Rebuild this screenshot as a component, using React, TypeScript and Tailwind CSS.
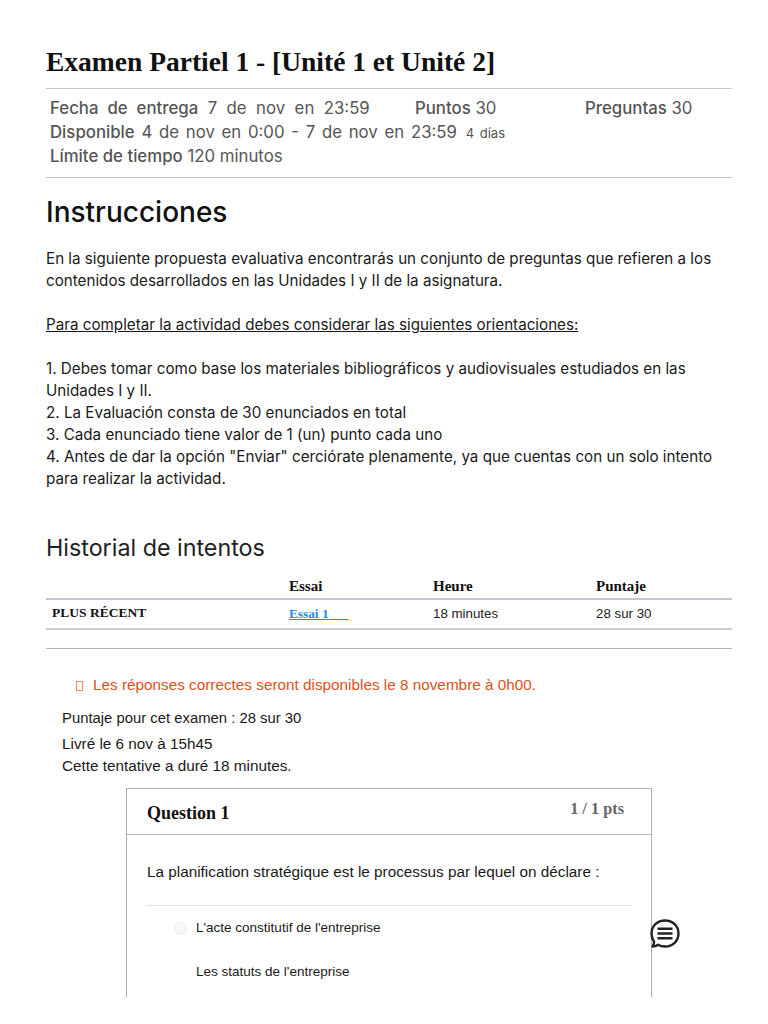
const serif = "font-['Liberation_Serif',serif]";
const arial = "font-['Liberation_Sans',sans-serif]";
const geo = "font-['Inter',sans-serif]";

function ChatIcon() {
  return (
    <svg width="32" height="32" viewBox="0 0 32 32" fill="none">
      <path d="M16 2.500C23.700 2.500 29.500 8 29.500 15.500S23.700 28.500 16 28.500c-2.600 0-5-.6-7-1.800-1.500 1.200-3.200 1.800-5.500 1.800 1-1.400 1.600-2.700 1.600-4.600C3.600 21.600 2.500 18.700 2.500 15.500 2.500 8 8.300 2.500 16 2.500Z" fill="white" stroke="#222" strokeWidth="2.400" strokeLinejoin="round" />
      <path d="M8.500 10.800h15M8.500 15.500h15M8.500 20.200h15" stroke="#222" strokeWidth="2.400" />
    </svg>
  );
}

export default function App() {
  return (
    <div className="relative h-[997px] overflow-hidden bg-white pl-[46px] pr-9 pt-[45px]">
      <h1 className={`${serif} border-b border-[#c8c8c8] pb-[9px] text-[27.500px] font-bold leading-[34px] text-[#111]`}>
        Examen Partiel 1 - [Unité 1 et Unité 2]
      </h1>

      <div className={`${geo} border-b border-[#c4c4c4] pb-[8px] pl-1 pt-[8px] text-[16.800px] leading-[23.500px] text-[#555]`}>
        <div className="flex">
          <div className="w-[365px] whitespace-pre"><b className="font-medium">Fecha  de  entrega</b>  7  de  nov  en  23:59</div>
          <div className="w-[170px]"><b className="font-medium">Puntos</b> 30</div>
          <div><b className="font-medium">Preguntas</b> 30</div>
        </div>
        <div className="[word-spacing:2px]"><b className="font-medium">Disponible</b> 4 de nov en 0:00 - 7 de nov en 23:59 <span className="ml-[2px] text-[13px]">4 días</span></div>
        <div><b className="font-medium">Límite de tiempo</b> 120 minutos</div>
      </div>

      <h2 className={`${geo} mt-[16px] text-[28px] font-medium leading-[36px] text-[#111]`}>Instrucciones</h2>

      <div className={`${geo} mt-[18px] text-[15.200px] leading-[22px] text-[#1a1a1a]`}>
        <p>En la siguiente propuesta evaluativa encontrarás un conjunto de preguntas que refieren a los</p>
        <p>contenidos desarrollados en las Unidades I y II de la asignatura.</p>
        <p className="mt-[22px] underline">Para completar la actividad debes considerar las siguientes orientaciones:</p>
        <p className="mt-[22px]">1. Debes tomar como base los materiales bibliográficos y audiovisuales estudiados en las</p>
        <p>Unidades I y II.</p>
        <p>2. La Evaluación consta de 30 enunciados en total</p>
        <p>3. Cada enunciado tiene valor de 1 (un) punto cada uno</p>
        <p>4. Antes de dar la opción "Enviar" cerciórate plenamente, ya que cuentas con un solo intento</p>
        <p>para realizar la actividad.</p>
      </div>

      <h2 className={`${geo} mt-[43px] text-[23.300px] leading-[30px] text-[#222]`}>Historial de intentos</h2>

      <div className="mt-[13px] border-b-2 border-[#c9ccd0]">
        <div className={`${serif} flex h-[24px] items-center border-b-2 border-[#c3c7cb] text-[15px] font-bold text-[#111]`}>
          <div className="ml-[243px] w-[144px]">Essai</div>
          <div className="w-[163px]">Heure</div>
          <div>Puntaje</div>
        </div>
        <div className={`${arial} flex h-[28px] items-center text-[13.300px] text-[#222]`}>
          <div className={`${serif} w-[243px] pl-[6px] text-[13.500px] font-bold text-[#111]`}>PLUS RÉCENT</div>
          <div className={`${serif} w-[144px] font-bold text-[#1a8fe3]`}><span className="underline whitespace-pre">Essai 1      </span></div>
          <div className="w-[163px]">18 minutes</div>
          <div>28 sur 30</div>
        </div>
      </div>

      <div className="mt-[18px] border-t border-[#b4b4b4]" />

      <div className={arial}>
        <div className="mt-[26px] flex items-center pl-[30px] text-[15.300px] leading-[20px] text-[#e0501a]">
          <span className="mr-[10px] mt-[2px] h-[10px] w-[7px] border border-[#e88a66]" />
          Les réponses correctes seront disponibles le 8 novembre à 0h00.
        </div>
        <p className="mt-[13px] pl-4 text-[14.850px] leading-[20px] text-[#1a1a1a]">Puntaje pour cet examen : 28 sur 30</p>
        <p className="mt-[6px] pl-4 text-[15.300px] leading-[20px] text-[#1a1a1a]">Livré le 6 nov à 15h45</p>
        <p className="mt-[2px] pl-4 text-[15.300px] leading-[20px] text-[#1a1a1a]">Cette tentative a duré 18 minutes.</p>
      </div>

      <div className="ml-[80px] mt-[12px] h-[300px] w-[526px] border border-[#b0b0b0]">
        <div className={`${serif} flex h-[46px] justify-between border-b border-[#b9b9b9] pl-[20px] pr-[27px]`}>
          <span className="pt-[12px] text-lg font-bold leading-[24px] text-[#111]">Question 1</span>
          <span className="pt-[8px] text-[16.300px] font-bold leading-[24px] text-[#666]">1 / 1 pts</span>
        </div>
        <div className={`${arial} px-[19px]`}>
          <p className="border-b border-[#e3e3e3] pb-[23px] pl-px pt-[27px] text-[15.300px] leading-[20px] text-[#1a1a1a]">
            La planification stratégique est le processus par lequel on déclare :
          </p>
          <div className="flex items-center pl-[28px] pt-[12px] text-[13.500px] leading-[20px] text-[#1a1a1a]">
            <span className="mr-[9px] mt-[2px] h-[13px] w-[13px] rounded-full border border-[#eaeaea] bg-[#f8f8f8]" />
            L'acte constitutif de l'entreprise
          </div>
          <p className="pl-[50px] pt-[24px] text-[13.500px] leading-[20px] text-[#1a1a1a]">Les statuts de l'entreprise</p>
        </div>
      </div>

      <div className="absolute left-[649px] top-[918px]"><ChatIcon /></div>
    </div>
  );
}
